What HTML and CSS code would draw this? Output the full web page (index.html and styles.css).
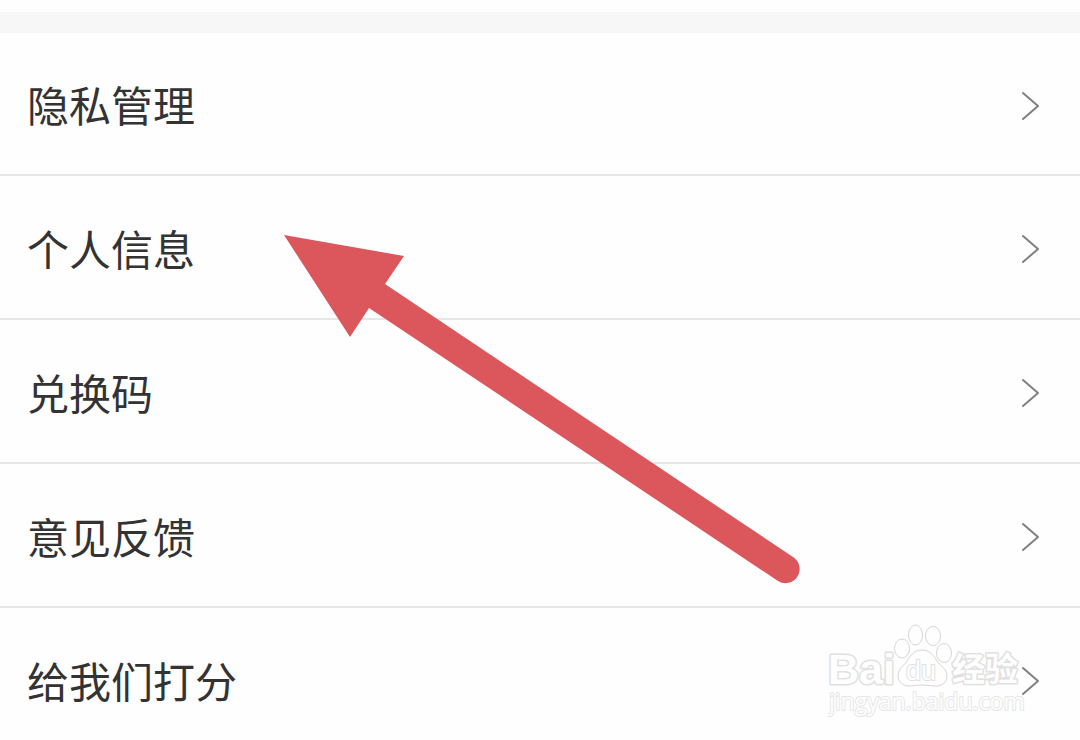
FILE: index.html
```html
<!DOCTYPE html>
<html lang="zh-CN">
<head>
<meta charset="utf-8">
<meta name="viewport" content="width=device-width, initial-scale=1">
<title>设置</title>
<link rel="stylesheet" href="styles.css">
</head>
<body>
<main class="page">
  <div class="band"></div>
  <nav class="menu">
    <a class="row" href="#privacy"><span class="label">隐私管理</span><svg class="chevron" viewBox="0 0 20 32" aria-hidden="true"><path d="M3 3 18 16 3 29"/></svg></a>
    <a class="row" href="#profile"><span class="label">个人信息</span><svg class="chevron" viewBox="0 0 20 32" aria-hidden="true"><path d="M3 3 18 16 3 29"/></svg></a>
    <a class="row" href="#redeem"><span class="label">兑换码</span><svg class="chevron" viewBox="0 0 20 32" aria-hidden="true"><path d="M3 3 18 16 3 29"/></svg></a>
    <a class="row" href="#feedback"><span class="label">意见反馈</span><svg class="chevron" viewBox="0 0 20 32" aria-hidden="true"><path d="M3 3 18 16 3 29"/></svg></a>
    <a class="row" href="#rate"><span class="label">给我们打分</span><svg class="chevron" viewBox="0 0 20 32" aria-hidden="true"><path d="M3 3 18 16 3 29"/></svg></a>
  </nav>
  <svg class="arrow" viewBox="0 0 520 352" aria-hidden="true">
    <path d="M0 1 120 22 101 50 509 323A14 14 0 0 1 494 347L85 74 66 103Z"/>
  </svg>
  <svg class="watermark" viewBox="0 0 200 100" role="img" aria-label="Baidu 经验">
    <text class="brand" x="0" y="63">Bai</text>
    <g class="paw">
      <ellipse cx="74" cy="27.5" rx="7.5" ry="9.5"/>
      <ellipse cx="87.5" cy="14" rx="7" ry="10"/>
      <ellipse cx="105" cy="15" rx="7.5" ry="9.5"/>
      <ellipse cx="116" cy="32" rx="7.5" ry="9.5"/>
      <path d="M94 29C86 29 82 35 79 40C76 45 70 47 70 55C70 61 75 65 81 65C86 65 89 64 94 64C99 64 103 65 108 65C115 65 119 61 119 54C118 47 112 45 109 40C106 35 102 29 94 29Z"/>
    </g>
    <text class="du" x="78" y="59">du</text>
    <text class="cjk" x="124" y="60">经验</text>
    <text class="site" x="1" y="89">jingyan.baidu.com</text>
  </svg>
</main>
</body>
</html>
```
FILE: styles.css
```css
* {
  box-sizing: border-box;
}

body {
  margin: 0;
  background: #fefefe;
  color: #333;
  font-family: "Noto Sans CJK SC", sans-serif;
}

.page {
  position: relative;
  height: 100vh;
  padding-top: 12px;
  overflow: hidden;
}

.band {
  height: 21px;
  background: #f7f7f7;
}

.row {
  display: flex;
  align-items: center;
  justify-content: space-between;
  height: 144px;
  padding: 4px 40px 0 27px;
  border-bottom: 2px solid #e6e6e6;
  color: inherit;
  font-size: 42px;
  line-height: 60px;
  text-decoration: none;
}

.row:first-child {
  height: 143px;
}

.label {
  padding-bottom: 3px;
}

.chevron {
  width: 20px;
  height: 32px;
  fill: none;
  stroke: #808080;
  stroke-width: 2;
  stroke-linecap: round;
  stroke-linejoin: round;
}

.arrow {
  position: absolute;
  top: 234px;
  left: 284px;
  width: 520px;
  height: 352px;
  fill: #dc575c;
}

.watermark {
  position: absolute;
  top: 621px;
  right: 52px;
  width: 200px;
  height: 100px;
  fill: #fefefe;
  stroke: #e0e0e0;
  stroke-width: 1;
}

.paw {
  stroke: #d6d6d6;
}

.brand,
.du,
.cjk,
.site {
  paint-order: stroke;
  stroke-width: 3;
  stroke-linejoin: round;
}

.brand {
  font: bold 43px "Liberation Sans", sans-serif;
}

.du {
  font: 27px "Liberation Sans", sans-serif;
  stroke-width: 2;
}

.cjk {
  font: bold 33px "Noto Sans CJK SC", sans-serif;
}

.site {
  font: 23px "Open Sans", "Noto Sans", sans-serif;
  stroke: #e6e6e6;
  stroke-width: 2;
}
```
